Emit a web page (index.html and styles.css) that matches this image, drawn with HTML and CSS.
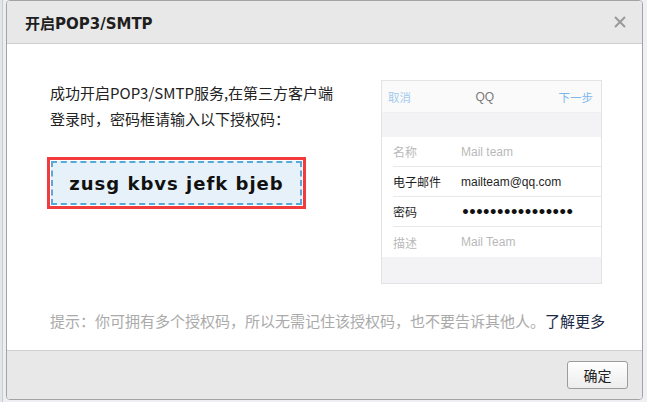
FILE: index.html
```html
<!DOCTYPE html>
<html lang="zh-CN">
<head>
<meta charset="utf-8">
<title>开启POP3/SMTP</title>
<link rel="stylesheet" href="styles.css">
</head>
<body>
<div class="page">
  <div class="backdrop"></div>
  <div class="dialog">
    <div class="dlg-head">
      <span class="dlg-title">开启POP3/SMTP</span>
      <span class="dlg-close" aria-label="关闭">
        <svg width="12" height="12" viewBox="0 0 12 12"><path d="M1 1L11 11M11 1L1 11" stroke="#9a9a9a" stroke-width="2" fill="none"/></svg>
      </span>
    </div>
    <div class="dlg-body">
      <div class="body-main">
        <div class="info">
          <p class="desc">成功开启POP3/SMTP服务,在第三方客户端<br>登录时，密码框请输入以下授权码：</p>
          <div class="code-frame"><div class="code">zusg kbvs jefk bjeb</div></div>
        </div>
        <div class="phone">
          <div class="ph-head">
            <span class="ph-cancel">取消</span>
            <span class="ph-title">QQ</span>
            <span class="ph-next">下一步</span>
          </div>
          <div class="ph-band"></div>
          <div class="ph-rows">
            <div class="ph-row muted"><span class="ph-label">名称</span><span class="ph-val">Mail team</span></div>
            <div class="ph-row"><span class="ph-label">电子邮件</span><span class="ph-val">mailteam@qq.com</span></div>
            <div class="ph-row"><span class="ph-label">密码</span><span class="ph-val dots">••••••••••••••••</span></div>
            <div class="ph-row muted"><span class="ph-label">描述</span><span class="ph-val">Mail Team</span></div>
          </div>
          <div class="ph-band ph-bottom"></div>
        </div>
      </div>
      <p class="tip">提示：你可拥有多个授权码，所以无需记住该授权码，也不要告诉其他人。<a class="more" href="#">了解更多</a></p>
    </div>
    <div class="dlg-foot">
      <button class="btn">确定</button>
    </div>
  </div>
</div>
</body>
</html>
```
FILE: styles.css
```css
html, body {
  margin: 0;
  padding: 0;
}
body {
  background: #eef0f3;
  font-family: "Noto Sans CJK SC", "Liberation Sans", sans-serif;
  width: 647px;
  height: 402px;
  overflow: hidden;
}
.page {
  display: flex;
  height: 402px;
}
.backdrop {
  width: 6px;
  flex: none;
  background: linear-gradient(to right, #e4e6ea 0, #e4e6ea 2px, #c9ccd2 2px, #c9ccd2 3px, #eceef1 3px);
}
.dialog {
  width: 635px;
  height: 398px;
  border: 1px solid #a3a3a3;
  border-radius: 4px;
  overflow: hidden;
  background: #fff;
  display: flex;
  flex-direction: column;
}
.dlg-head {
  height: 42px;
  flex: none;
  background: #e8e8e8;
  border-bottom: 1px solid #cfcfcf;
  display: flex;
  align-items: center;
  justify-content: space-between;
  padding: 0 16px 0 18px;
}
.dlg-title {
  font-family: "DejaVu Sans", "Noto Sans CJK SC", sans-serif;
  font-weight: bold;
  font-size: 15px;
  color: #1e1e1e;
}
.dlg-close {
  display: flex;
  width: 12px;
  height: 12px;
}
.dlg-body {
  height: 307px;
  flex: none;
  border-bottom: 1px solid #cfcfcf;
  padding: 36px 0 0 43px;
  box-sizing: border-box;
  display: flex;
  flex-direction: column;
}
.body-main {
  display: flex;
  justify-content: space-between;
  padding-right: 40px;
}
.desc {
  margin: 0;
  font-size: 15px;
  line-height: 26px;
  color: #222;
}
.code-frame {
  margin-top: 25px;
  margin-left: -3px;
  width: 253px;
  height: 46px;
  border: 3px solid #f23b3b;
  padding: 0;
}
.code {
  box-sizing: border-box;
  margin: 1px;
  width: 251px;
  height: 44px;
  border: 2px dashed #58a8d8;
  background: #e6f1f9;
  display: flex;
  align-items: center;
  justify-content: center;
  font-family: "DejaVu Sans", sans-serif;
  font-weight: bold;
  font-size: 18px;
  letter-spacing: 1px;
  color: #111;
}
.phone {
  width: 219px;
  height: 202px;
  border: 1px solid #e3e3e3;
  background: #f3f3f5;
  display: flex;
  flex-direction: column;
  font-family: "Liberation Sans", "Noto Sans CJK SC", sans-serif;
}
.ph-head {
  height: 31px;
  background: #fafafa;
  border-bottom: 1px solid #f0f0f0;
  display: flex;
  align-items: center;
  justify-content: space-between;
  padding: 0 8px 0 6px;
  font-size: 11.5px;
}
.ph-cancel {
  color: #a4cbee;
}
.ph-title {
  color: #7a7a7a;
  font-size: 12px;
}
.ph-next {
  color: #7eb6ea;
}
.ph-band {
  height: 24px;
}
.ph-rows {
  background: #fff;
  padding-left: 11px;
}
.ph-row {
  height: 30px;
  display: flex;
  align-items: center;
  font-size: 12px;
  color: #1f1f1f;
  border-bottom: 1px solid #e8e8e8;
  box-sizing: border-box;
}
.ph-row:last-child {
  border-bottom: none;
}
.ph-row.muted {
  color: #b9b9b9;
}
.ph-label {
  width: 68px;
  flex: none;
}
.dots {
  font-family: "DejaVu Sans", sans-serif;
  font-size: 14px;
  font-weight: bold;
  letter-spacing: -2px;
  color: #111;
}
.ph-bottom {
  flex: 1;
}
.tip {
  margin: 24px 0 0;
  font-size: 15px;
  line-height: 26px;
  color: #aaaaaa;
}
.more {
  color: #1b2a45;
  text-decoration: none;
}
.dlg-foot {
  flex: 1;
  background: #e8e8e8;
  display: flex;
  justify-content: flex-end;
  align-items: flex-start;
  padding: 10px 14px 0 0;
}
.btn {
  width: 61px;
  height: 28px;
  border: 1px solid #9c9c9c;
  border-radius: 3px;
  background: linear-gradient(#ffffff, #ececec);
  font-family: "Noto Sans CJK SC", sans-serif;
  font-size: 14px;
  color: #222;
  padding: 0;
}
```
